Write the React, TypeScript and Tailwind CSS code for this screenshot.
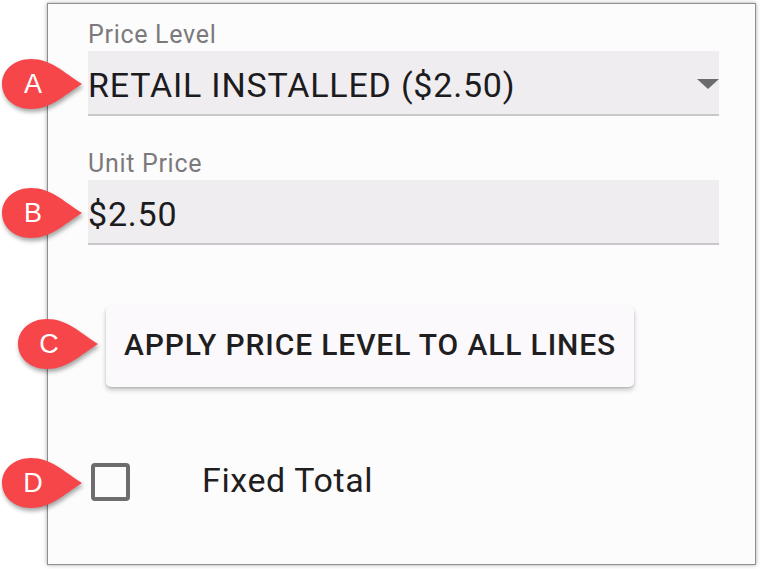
import React from "react";

const font = { fontFamily: "Roboto, 'Liberation Sans', sans-serif" };

function Callout({ letter, className }: { letter: string; className: string }) {
  return (
    <div className={`absolute grid w-[82px] h-[50px] ${className}`}>
      <svg
        width="82"
        height="50"
        viewBox="0 0 82 50"
        className="col-start-1 row-start-1 drop-shadow-[1px_3px_2px_rgba(0,0,0,0.35)]"
      >
        <path
          d="M81 25 C62 13 50 0 30 0 C13 0 1 11 1 25 C1 39 13 50 30 50 C50 50 62 37 81 25 Z"
          fill="#f6464a"
        />
      </svg>
      <span
        className="col-start-1 row-start-1 z-10 ml-[17px] w-[30px] h-[50px] flex items-center justify-center text-white text-[27px]"
        style={{ fontFamily: "'Liberation Sans', Arial, sans-serif" }}
      >
        {letter}
      </span>
    </div>
  );
}

function FieldLabel({ children }: { children: React.ReactNode }) {
  return (
    <div className="h-[33px] leading-[33px] text-[25px] tracking-[0.7px] text-[#7b797c]">
      {children}
    </div>
  );
}

export default function App() {
  return (
    <div className="relative w-[760px] h-[569px] bg-white overflow-hidden" style={font}>
      <div className="ml-[47px] mt-[3px] w-[709px] h-[562px] bg-[#fdfcfd] border border-[#8f8e90] shadow-[0_0_4px_rgba(0,0,0,0.35)] pt-[14px] pl-[40px] pr-[36px] flex flex-col items-start">
        <FieldLabel>Price Level</FieldLabel>
        <div className="self-stretch h-[65px] bg-[#efedf0] border-b-2 border-[#c9c7ca] pt-[14px] flex justify-between">
          <div className="leading-[40px] text-[34px] tracking-[0.8px] text-[#1c1b1d]">
            RETAIL INSTALLED ($2.50)
          </div>
          <svg width="22" height="10" viewBox="0 0 22 10" className="mt-[14px]">
            <path d="M0 0 L22 0 L11 10 Z" fill="#6b6a6c" />
          </svg>
        </div>

        <div className="mt-[31px]">
          <FieldLabel>Unit Price</FieldLabel>
        </div>
        <div className="self-stretch h-[65px] bg-[#efedf0] border-b-2 border-[#c9c7ca] pt-[14px]">
          <div className="leading-[40px] text-[34px] tracking-[0.8px] text-[#1c1b1d]">$2.50</div>
        </div>

        <button className="mt-[61px] ml-[18px] w-[528px] h-[81px] pb-[4px] rounded-[5px] bg-[#fbf9fb] shadow-[0_3px_5px_rgba(0,0,0,0.22),0_1px_2px_rgba(0,0,0,0.12)] flex items-center justify-center text-[30px] font-medium tracking-[0.02857em] text-[#1f1e20]">
          APPLY PRICE LEVEL TO ALL LINES
        </button>

        <div className="mt-[76px] flex items-start">
          <div className="ml-[3px] w-[39px] h-[38px] rounded-[4px] border-[4px] border-[#6d6c6e]" />
          <span className="ml-[72px] -mt-[3px] text-[34px] leading-[40px] tracking-[0.6px] text-[#1f1e20]">
            Fixed Total
          </span>
        </div>
      </div>

      <Callout letter="A" className="left-[1px] top-[59px]" />
      <Callout letter="B" className="left-[1px] top-[188px]" />
      <Callout letter="C" className="left-[17px] top-[319px]" />
      <Callout letter="D" className="left-[1px] top-[458px]" />
    </div>
  );
}
